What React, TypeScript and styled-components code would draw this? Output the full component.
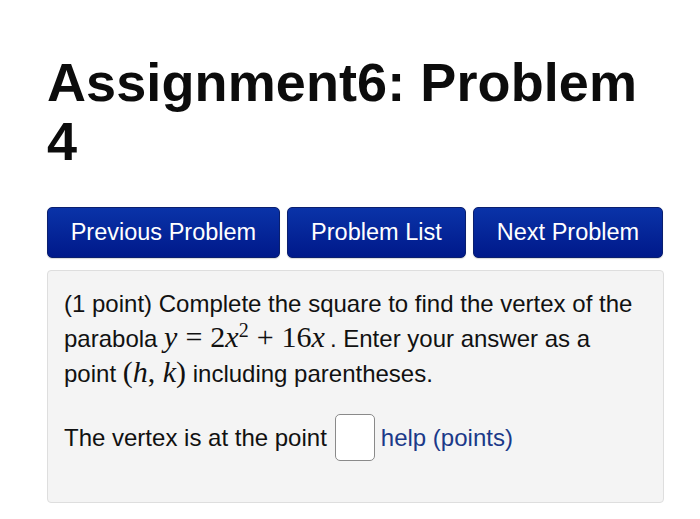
import React from 'react';
import styled, {createGlobalStyle} from 'styled-components';

const GlobalStyle = createGlobalStyle`
  html, body {
    margin: 0;
    padding: 0;
    background: #ffffff;
  }
  body {
    font-family: "Liberation Sans", Arial, sans-serif;
    color: #111;
  }
`

const Page = styled.div`
  padding: 0 37px 0 47px;
  width: 616px;
`

const Title = styled.h1`
  margin: 0;
  padding-top: 53px;
  font-size: 54px;
  line-height: 59px;
  font-weight: 700;
  color: #0c0c0c;
  letter-spacing: 0.1px;
`

const Nav = styled.div`
  display: flex;
  gap: 7px;
  margin-top: 36px;
`

const NavButton = styled.button<{ $width: number }>`
  all: unset;
  box-sizing: border-box;
  width: ${p => p.$width}px;
  height: 51px;
  display: flex;
  align-items: center;
  justify-content: center;
  border-radius: 5px;
  border: 1px solid #0a1f6e;
  background: linear-gradient(#0a33a8, #00198a);
  color: #ffffff;
  font-size: 23.5px;
  font-family: "Liberation Sans", Arial, sans-serif;
  box-shadow: 0 1px 1px rgba(0, 0, 0, 0.15);
`

const Problem = styled.div`
  box-sizing: border-box;
  margin-top: 12px;
  width: 617px;
  height: 233px;
  background: #f4f4f4;
  border: 1px solid #dedede;
  border-radius: 4px;
  padding: 15px 16px;
`

const Para = styled.p`
  margin: 0;
  font-size: 24px;
  line-height: 35px;
  color: #111;
`

const Math = styled.span<{ $after?: number }>`
  font-family: "Liberation Serif", "Times New Roman", serif;
  font-size: 30px;
  line-height: 0;
  margin-right: ${p => p.$after ?? 0}px;
`

const Op = styled.span`
  margin: 0 8px;
`

const Sup = styled.sup`
  font-size: 20px;
  line-height: 0;
  vertical-align: 10px;
`

const V = styled.i`
  font-style: italic;
`

const Answer = styled.div`
  display: flex;
  align-items: center;
  margin-top: 23px;
  font-size: 24px;
  color: #111;
`

const AnswerBox = styled.input`
  box-sizing: border-box;
  width: 40px;
  height: 47px;
  margin: 0 6px 0 8px;
  border: 1.5px solid #8a8a8a;
  border-radius: 5px;
  background: #ffffff;
  padding: 0;
`

const Help = styled.a`
  color: #1b3989;
  text-decoration: none;
`

export default function App() {
    return (
        <>
            <GlobalStyle/>
            <Page>
                <Title>Assignment6: Problem 4</Title>
                <Nav>
                    <NavButton $width={234}>Previous Problem</NavButton>
                    <NavButton $width={180}>Problem List</NavButton>
                    <NavButton $width={191}>Next Problem</NavButton>
                </Nav>
                <Problem>
                    <Para>
                        (1 point) Complete the square to find the vertex of the parabola{' '}
                        <Math $after={5}><V>y</V><Op>=</Op>2<V>x</V><Sup>2</Sup><Op>+</Op>16<V>x</V></Math>. Enter your answer as a
                        point <Math>(<V>h</V>, <V>k</V>)</Math> including parentheses.
                    </Para>
                    <Answer>
                        The vertex is at the point
                        <AnswerBox type="text"/>
                        <Help href="#">help (points)</Help>
                    </Answer>
                </Problem>
            </Page>
        </>
    );
}
